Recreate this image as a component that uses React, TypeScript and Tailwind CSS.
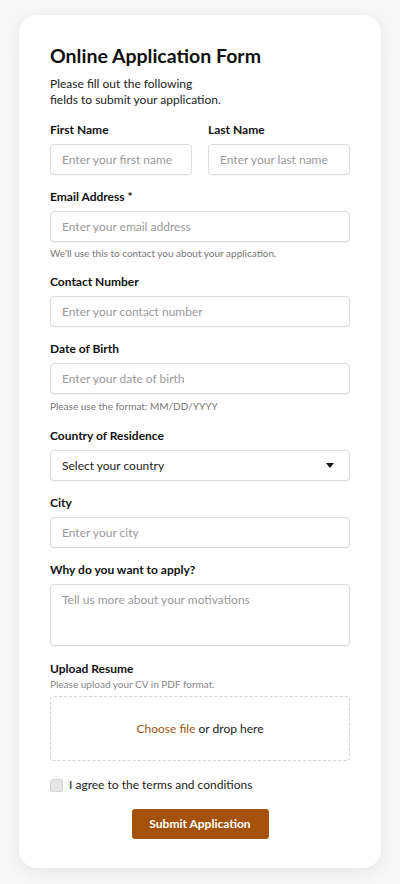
import React from "react";

const inputCls =
  "block w-full h-[31px] rounded-[4px] border border-[#dcdcdc] bg-white px-[11px] text-[12px] text-[#222] placeholder:text-[#9a9a9a] shadow-[0_1px_1px_rgba(0,0,0,0.04)] outline-none";

function Label({ children }: { children: React.ReactNode }) {
  return (
    <div className="text-[12px] leading-[16px] font-bold text-[#111] mb-[6px]">
      {children}
    </div>
  );
}

export default function App() {
  return (
    <div
      className="min-h-[884px] w-[400px] bg-[#f8f8f8] pt-[15px] px-[19px] pb-[16px]"
      style={{ fontFamily: "Lato, 'Noto Sans', sans-serif" }}
    >
      <div className="rounded-[18px] bg-white shadow-[0_4px_18px_rgba(0,0,0,0.08)] px-[31px] pt-[29px] pb-[29px]">
        <h1 className="text-[19.5px] leading-[24px] font-bold text-[#111]">
          Online Application Form
        </h1>
        <p className="mt-[8px] text-[12px] leading-[16px] text-[#222]">
          Please fill out the following
          <br />
          fields to submit your application.
        </p>

        <div className="mt-[14px] flex gap-[16px]">
          <div className="flex-1">
            <Label>First Name</Label>
            <input className={inputCls} placeholder="Enter your first name" />
          </div>
          <div className="flex-1">
            <Label>Last Name</Label>
            <input className={inputCls} placeholder="Enter your last name" />
          </div>
        </div>

        <div className="mt-[14px]">
          <Label>Email Address *</Label>
          <input className={inputCls} placeholder="Enter your email address" />
          <div className="mt-[4px] text-[10px] leading-[14px] text-[#777]">
            We'll use this to contact you about your application.
          </div>
        </div>

        <div className="mt-[14px]">
          <Label>Contact Number</Label>
          <input className={inputCls} placeholder="Enter your contact number" />
        </div>

        <div className="mt-[14px]">
          <Label>Date of Birth</Label>
          <input className={inputCls} placeholder="Enter your date of birth" />
          <div className="mt-[5px] text-[10px] leading-[14px] text-[#777]">
            Please use the format: MM/DD/YYYY
          </div>
        </div>

        <div className="mt-[15px]">
          <Label>Country of Residence</Label>
          <div className="flex h-[31px] items-center justify-between rounded-[4px] border border-[#dcdcdc] bg-white pl-[11px] pr-[15px] text-[12px] text-[#222] shadow-[0_1px_1px_rgba(0,0,0,0.04)]">
            <span>Select your country</span>
            <svg width="8" height="5" viewBox="0 0 8 5">
              <path d="M0 0 L8 0 L4 5 Z" fill="#111" />
            </svg>
          </div>
        </div>

        <div className="mt-[14px]">
          <Label>City</Label>
          <input className={inputCls} placeholder="Enter your city" />
        </div>

        <div className="mt-[14px]">
          <Label>Why do you want to apply?</Label>
          <textarea
            className="block w-full h-[62px] resize-none rounded-[4px] border border-[#dcdcdc] bg-white px-[11px] py-[7px] text-[12px] leading-[16px] text-[#222] placeholder:text-[#9a9a9a] shadow-[0_1px_1px_rgba(0,0,0,0.04)] outline-none"
            placeholder="Tell us more about your motivations"
          />
        </div>

        <div className="mt-[15px]">
          <div className="text-[12px] leading-[16px] font-bold text-[#111]">
            Upload Resume
          </div>
          <div className="text-[10px] leading-[14px] text-[#888]">
            Please upload your CV in PDF format.
          </div>
          <div className="mt-[5px] flex h-[65px] items-center justify-center rounded-[4px] border border-dashed border-[#d4d4d4] text-[12px] text-[#222]">
            <span>
              <span className="text-[#a0560f]">Choose file</span> or drop here
            </span>
          </div>
        </div>

        <div className="mt-[16px] flex items-center gap-[6px]">
          <span className="block h-[13px] w-[13px] rounded-[3px] border border-[#d0d0d0] bg-[#e6e6e6]" />
          <span className="text-[12px] leading-[16px] text-[#222]">
            I agree to the terms and conditions
          </span>
        </div>

        <div className="mt-[16px] flex justify-center">
          <button className="h-[30px] w-[137px] rounded-[3px] bg-[#a4520b] text-[12px] font-bold text-white">
            Submit Application
          </button>
        </div>
      </div>
    </div>
  );
}
